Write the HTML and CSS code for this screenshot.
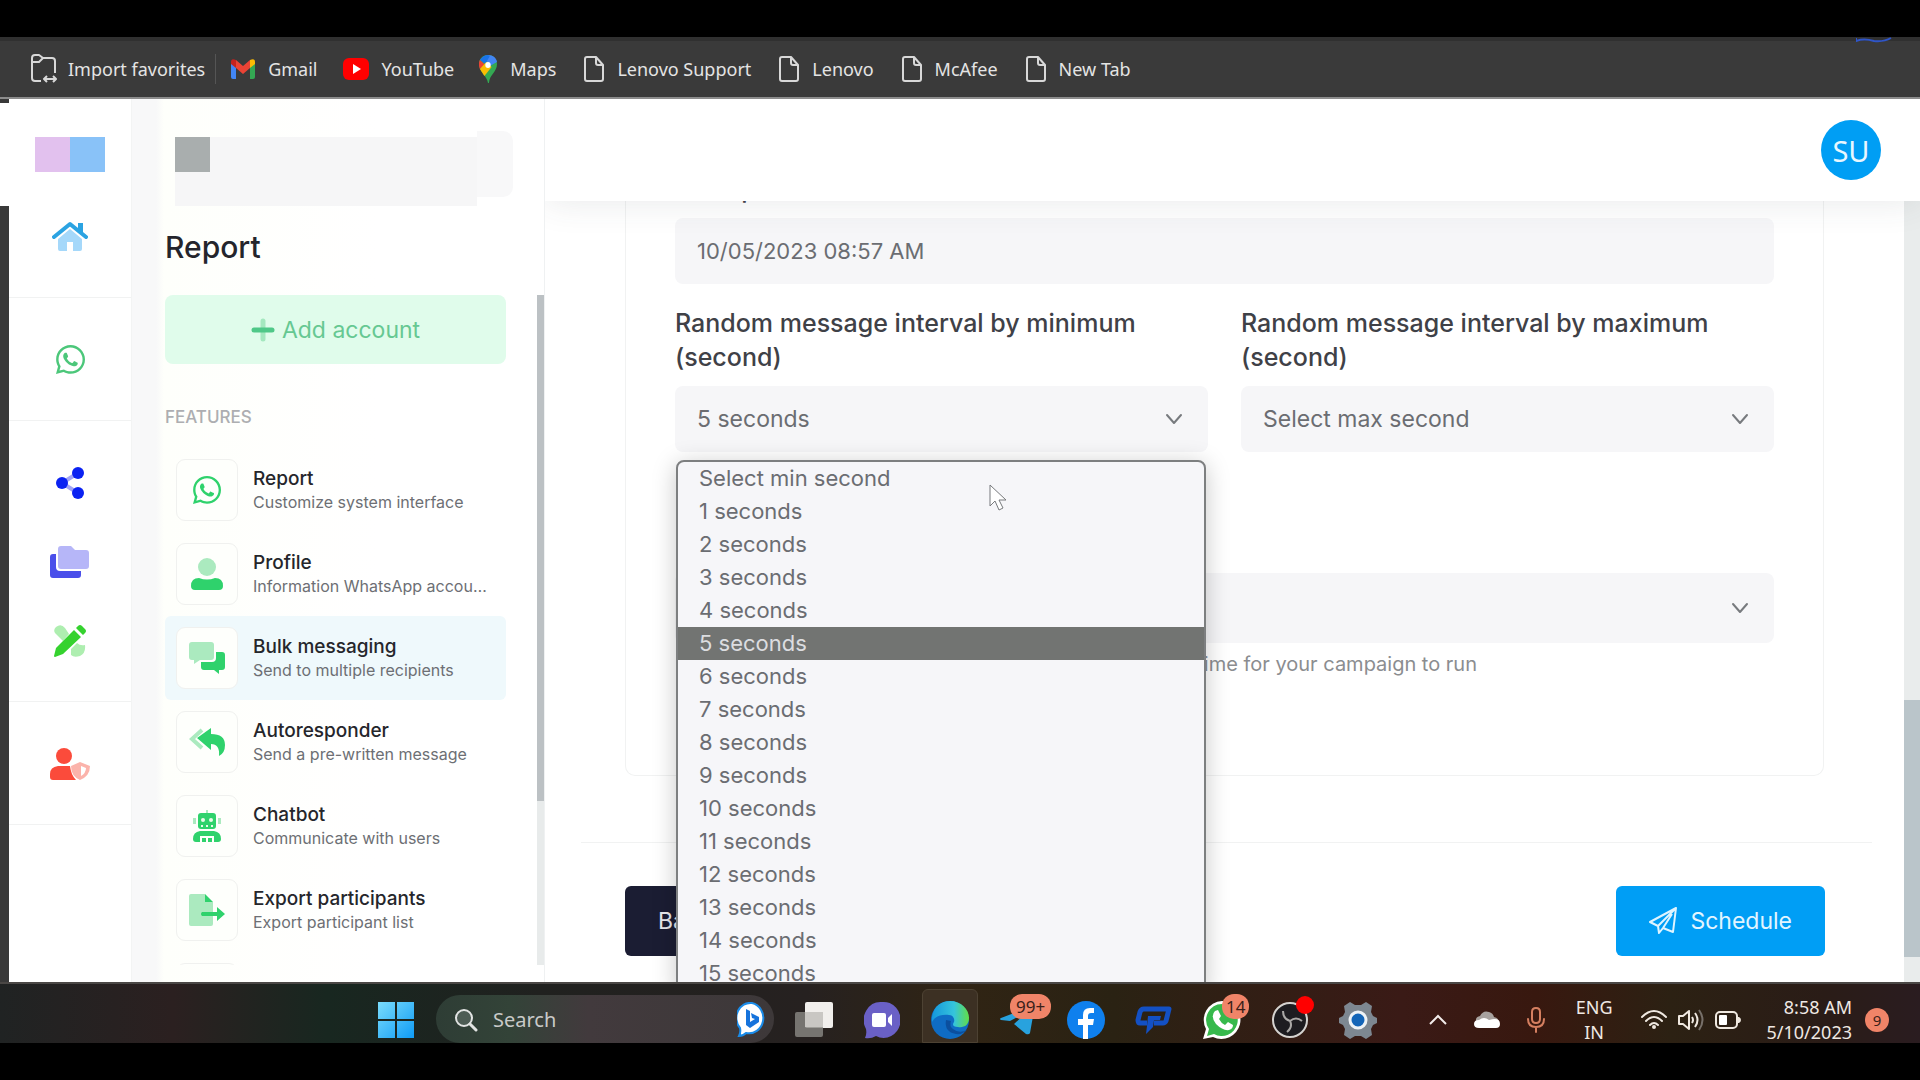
FILE: index.html
```html
<!DOCTYPE html>
<html lang="en">
<head>
  <meta charset="utf-8">
  <title>Bulk messaging</title>
  <link rel="stylesheet" href="styles.css">
</head>
<body>
  <svg class="defs" aria-hidden="true">
    <symbol id="wa" viewBox="0 32 448 448"><path fill="currentColor" d="M380.9 97.1C339 55.1 283.2 32 223.9 32c-122.4 0-222 99.6-222 222 0 39.1 10.2 77.3 29.6 111L0 480l117.7-30.9c32.4 17.7 68.9 27 106.1 27h.1c122.3 0 224.1-99.6 224.1-222 0-59.3-25.2-115-67.1-157zm-157 341.6c-33.2 0-65.7-8.9-94-25.7l-6.7-4-69.8 18.3L72 359.2l-4.4-7c-18.5-29.4-28.2-63.3-28.2-98.2 0-101.7 82.8-184.5 184.6-184.5 49.3 0 95.6 19.2 130.4 54.1 34.8 34.9 56.2 81.2 56.1 130.5 0 101.8-84.9 184.6-186.6 184.6zm101.2-138.2c-5.5-2.8-32.8-16.2-37.9-18-5.1-1.9-8.8-2.8-12.5 2.8-3.7 5.6-14.3 18-17.6 21.8-3.2 3.7-6.5 4.2-12 1.4-32.6-16.3-54-29.1-75.5-66-5.7-9.8 5.7-9.1 16.3-30.3 1.8-3.7.9-6.9-.5-9.7-1.4-2.8-12.5-30.1-17.1-41.2-4.5-10.8-9.1-9.3-12.5-9.5-3.2-.2-6.9-.2-10.6-.2-3.7 0-9.7 1.4-14.8 6.9-5.1 5.6-19.4 19-19.4 46.3 0 27.3 19.9 53.7 22.6 57.4 2.8 3.7 39.1 59.7 94.8 83.8 35.2 15.2 49 16.5 66.6 13.9 10.7-1.6 32.8-13.4 37.4-26.4 4.6-13 4.6-24.1 3.2-26.4-1.3-2.5-5-3.9-10.5-6.6z"/></symbol>
    <symbol id="page" viewBox="0 0 20 26"><path fill="none" stroke="#d8d8d8" stroke-width="2" stroke-linejoin="round" d="M3 1h9l7 8v14q0 2-2 2H3q-2 0-2-2V3q0-2 2-2zM12 1v6q0 2 2 2h5"/></symbol>
    <symbol id="chev" viewBox="0 0 18 12"><path fill="none" stroke="#777a7e" stroke-width="2" stroke-linecap="round" stroke-linejoin="round" d="M2 2l7 8 7-8"/></symbol>
  </svg>

  <div class="letterbox"></div>

  <nav class="favbar">
    <a class="fav import" href="#"><svg width="26" height="30" viewBox="0 0 26 30"><path fill="none" stroke="#d8d8d8" stroke-width="2" stroke-linejoin="round" d="M10 27H4q-3 0-3-3V4q0-3 3-3h4l4 3h9q3 0 3 3v12M1 8h7l4-4M13 25h12M16 22l-3 3 3 3M22 22l3 3-3 3"/></svg>Import favorites</a>
    <a class="fav" href="#"><svg width="24" height="20" viewBox="0 0 24 20"><path fill="#4285f4" d="M0 3v15q0 2 2 2h3V8z"/><path fill="#34a853" d="M19 8v12h3q2 0 2-2V3z"/><path fill="#ea4335" d="M5 1l7 6 7-6v8l-7 6-7-6z"/><path fill="#c5221f" d="M0 3q0-4 5-2v8L0 5z"/><path fill="#fbbc04" d="M24 3q0-4-5-2v8l5-4z"/></svg>Gmail</a>
    <a class="fav" href="#"><svg width="26" height="22" viewBox="0 0 26 22"><rect width="26" height="22" rx="6" fill="#f00"/><path fill="#fff" d="M10 6v10l8-5z"/></svg>YouTube</a>
    <a class="fav" href="#"><svg width="18" height="28" viewBox="0 0 20 28" preserveAspectRatio="none"><path fill="#34a853" d="M0 9C0 4 4 0 10 0s10 4 10 9c0 8-8 10-9 19h-1C9 21 0 17 0 9z"/><path fill="#4285f4" d="M10 0c6 0 9 3 10 7l-8 4-6-9z"/><path fill="#1a73e8" d="M10 0C6 0 3 2 1 5l6 4 5-8z"/><path fill="#ea4335" d="M1 5l6 5-6 4C-1 9 0 7 1 5z"/><path fill="#fbbc04" d="M1 14l7-7 6 5-8 9z"/><circle cx="10" cy="10" r="3" fill="#fff"/></svg>Maps</a>
    <a class="fav doc" href="#"><svg width="20" height="26"><use href="#page"/></svg>Lenovo Support</a>
    <a class="fav doc" href="#"><svg width="20" height="26"><use href="#page"/></svg>Lenovo</a>
    <a class="fav doc" href="#"><svg width="20" height="26"><use href="#page"/></svg>McAfee</a>
    <a class="fav doc" href="#"><svg width="20" height="26"><use href="#page"/></svg>New Tab</a>
    <svg class="bingtip" width="36" height="6" viewBox="0 0 36 6"><path fill="none" stroke="#2f55c8" stroke-width="2" d="M0 1v3q8-3 18 0 10 1 17-3"/></svg>
  </nav>

  <div class="view">
    <div class="edge"></div>

    <nav class="rail">
      <div class="brand"><span class="px pink"></span><span class="px blue"></span></div>
      <div class="group">
        <a href="#" aria-label="Home"><svg width="36" height="30" viewBox="0 0 36 30"><path fill="#a5d8fa" d="M18 8L6 18v10q0 2 2 2h7v-9h6v9h7q2 0 2-2V18z"/><path fill="none" stroke="#2ba3e2" stroke-width="4" stroke-linecap="round" stroke-linejoin="round" d="M2 16L18 3l16 13"/><path fill="#2ba3e2" d="M26 2h5v11l-5-4z"/></svg></a>
      </div>
      <div class="group tall">
        <a href="#" aria-label="WhatsApp" class="green"><svg width="29" height="29"><use href="#wa"/></svg></a>
      </div>
      <div class="group tall">
        <a href="#" aria-label="Share"><svg width="28" height="32" viewBox="0 0 28 32"><path stroke="#a3a5f5" stroke-width="4" fill="none" d="M22 6L6 16l16 10"/><g fill="#0b22f2"><circle cx="22" cy="6" r="6"/><circle cx="6" cy="16" r="6"/><circle cx="22" cy="26" r="6"/></g></svg></a>
        <a href="#" aria-label="Files"><svg width="40" height="32" viewBox="0 0 40 32"><path fill="#4a4fea" d="M3 8h3v13q0 4 4 4h21v4q0 3-3 3H3q-3 0-3-3V11q0-3 3-3z"/><path fill="#b6b6f8" d="M11 0h10l4 4h11q3 0 3 3v13q0 3-3 3H11q-3 0-3-3V3q0-3 3-3z"/></svg></a>
        <a href="#" aria-label="Tools"><svg width="32" height="32" viewBox="0 0 32 32"><path fill="#aeeeb0" d="M2 2q5-4 9 1l4 6-6 7-8-8q-2-3 1-6zM17 24l6-6q3 3 8 2 1 8-5 11-6 2-9-1z"/><path fill="#35d22e" d="M20 5l7 7L9 29l-8 3q-1 0-1-1l2-8zM22 3l2-2q2-2 4 0l3 3q2 2 0 4l-2 2z"/></svg></a>
      </div>
      <div class="group tall">
        <a href="#" aria-label="Users"><svg width="40" height="32" viewBox="0 0 40 32"><g fill="#fb4b3b"><circle cx="14" cy="8" r="8"/><path d="M8 18h12q1 9 6 14H3q-3 0-3-3v-3q0-7 8-8z"/></g><path fill="#fbb3ab" d="M30 14l10 4q0 10-10 14-9-4-9-14zM31 18v10q5-3 5-8z" fill-rule="evenodd"/></svg></a>
      </div>
    </nav>

    <aside class="side">
      <div class="side-head"><span class="blur"><span class="px grey"></span></span><span class="pill"></span></div>
      <h2>Report</h2>
      <div class="side-body">
        <div class="list">
          <button class="add"><svg width="24" height="24" viewBox="0 0 24 24"><path stroke="#a4e8bf" stroke-width="5" stroke-linecap="round" d="M12 3v18"/><path stroke="#4fc888" stroke-width="5" stroke-linecap="round" d="M3 12h18"/></svg>Add account</button>
          <h3>FEATURES</h3>
          <a class="item" href="#"><span class="ico"><svg width="28" height="28"><use href="#wa"/></svg></span><span class="txt"><b>Report</b><small>Customize system interface</small></span></a>
          <a class="item" href="#"><span class="ico"><svg width="32" height="32" viewBox="0 0 32 32"><circle cx="16" cy="9" r="9" fill="#abeabf"/><path fill="currentColor" d="M8 20q8 3 16 0 8 0 8 8 0 4-4 4H4q-4 0-4-4 0-8 8-8z"/></svg></span><span class="txt"><b>Profile</b><small>Information WhatsApp account and more</small></span></a>
          <a class="item active" href="#"><span class="ico"><svg width="36" height="32" viewBox="0 0 36 32"><path fill="currentColor" d="M27 10h6q3 0 3 3v12q0 3-3 3h-3v4l-5-4H15q-3 0-3-3v-5h11q4 0 4-4z"/><path fill="#abeabf" d="M3 0h19q3 0 3 3v12q0 3-3 3H11l-6 4v-4H3q-3 0-3-3V3q0-3 3-3z"/></svg></span><span class="txt"><b>Bulk messaging</b><small>Send to multiple recipients</small></span></a>
          <a class="item" href="#"><span class="ico"><svg width="36" height="28" viewBox="0 0 36 28"><path fill="none" stroke="#abeabf" stroke-width="4" d="M13 2L3 11l10 9"/><path fill="currentColor" d="M8 10L22 0v6q14 0 14 11 0 8-6 11 1-12-8-12v6z"/></svg></span><span class="txt"><b>Autoresponder</b><small>Send a pre-written message</small></span></a>
          <a class="item" href="#"><span class="ico"><svg width="28" height="32" viewBox="0 0 28 32"><path fill="#abeabf" d="M0 8h3v6H0zM25 8h3v6h-3zM13 0h2v4h-2z"/><path fill="currentColor" d="M8 3h12q3 0 3 3v10q0 3-3 3H8q-3 0-3-3V6q0-3 3-3zM7 21h14q7 1 7 8 0 3-3 3h-4v-6H7v6H3q-3 0-3-3 0-7 7-8zM9 28h4v4H9zM15 28h4v4h-4z"/><g fill="#e9fbe9"><circle cx="10" cy="10" r="2"/><circle cx="18" cy="10" r="2"/><path d="M8 15h2v2H8zM13 15h2v2h-2zM18 15h2v2h-2z"/></g></svg></span><span class="txt"><b>Chatbot</b><small>Communicate with users</small></span></a>
          <a class="item" href="#"><span class="ico"><svg width="36" height="32" viewBox="0 0 36 32"><path fill="#abeabf" d="M2 0h14v8h8v22q0 2-2 2H2q-2 0-2-2V2q0-2 2-2z"/><path fill="currentColor" d="M16 0l8 8h-8zM13 18h15v-5l8 7-8 7v-5H13q-2-2 0-4z"/></svg></span><span class="txt"><b>Export participants</b><small>Export participant list</small></span></a>
          <a class="item" href="#" aria-label="More"><span class="ico"></span></a>
        </div>
        <div class="side-track"><div class="side-thumb"></div></div>
      </div>
    </aside>

    <main class="main">
      <header class="topbar"><button class="avatar">SU</button></header>
      <div class="main-body">
        <form class="sheet" onsubmit="return false">
          <div class="card">
            <label class="cut" for="post">Time post</label>
            <input class="field" id="post" type="text" value="10/05/2023 08:57 AM">
            <div class="cols">
              <div class="col">
                <label for="min">Random message interval by minimum (second)</label>
                <div class="pick">
                  <select class="field" id="min"><option>5 seconds</option></select>
                  <svg width="18" height="12"><use href="#chev"/></svg>
                </div>
                <ul class="menu" role="listbox" aria-label="Minimum seconds">
                  <li role="option">Select min second</li>
                  <li role="option">1 seconds</li>
                  <li role="option">2 seconds</li>
                  <li role="option">3 seconds</li>
                  <li role="option">4 seconds</li>
                  <li role="option" class="on" aria-selected="true">5 seconds</li>
                  <li role="option">6 seconds</li>
                  <li role="option">7 seconds</li>
                  <li role="option">8 seconds</li>
                  <li role="option">9 seconds</li>
                  <li role="option">10 seconds</li>
                  <li role="option">11 seconds</li>
                  <li role="option">12 seconds</li>
                  <li role="option">13 seconds</li>
                  <li role="option">14 seconds</li>
                  <li role="option">15 seconds</li>
                </ul>
              </div>
              <div class="col">
                <label for="max">Random message interval by maximum (second)</label>
                <div class="pick">
                  <select class="field" id="max"><option>Select max second</option></select>
                  <svg width="18" height="12"><use href="#chev"/></svg>
                </div>
              </div>
            </div>
            <div class="pick run">
              <select class="field" aria-label="Campaign time"><option></option></select>
              <svg width="18" height="12"><use href="#chev"/></svg>
            </div>
            <p class="help">time for your campaign to run</p>
          </div>
          <footer class="actions">
            <button class="btn dark">Back</button>
            <button class="btn primary"><svg width="28" height="28" viewBox="0 0 28 28"><path fill="none" stroke="#dff4ff" stroke-width="2" stroke-linejoin="round" d="M27 1L1 15l8 4 1 7 4-5 10 4zM27 1L9 19M23 7l-9 14"/></svg>Schedule</button>
          </footer>
        </form>
        <div class="track"><div class="thumb"></div></div>
      </div>
    </main>

    <svg class="cursor" width="18" height="28" viewBox="0 0 18 28"><path fill="#fff" stroke="#77797c" d="M1 1v21l5-5 4 9 4-2-4-8h7z"/></svg>
  </div>

  <div class="taskbar">
    <button class="app" aria-label="Start"><svg width="36" height="36" viewBox="0 0 36 36"><defs><linearGradient id="win" x1="0" y1="0" x2="1" y2="1"><stop offset="0" stop-color="#7adcfb"/><stop offset="1" stop-color="#0f9bf5"/></linearGradient></defs><path fill="url(#win)" d="M0 0h17v17H0zM19 0h17v17H19zM0 19h17v17H0zM19 19h17v17H19z"/></svg></button>
    <label class="search">
      <svg width="24" height="24" viewBox="0 0 24 24"><circle cx="10" cy="10" r="8" fill="#4d5c54" stroke="#e2e4e3" stroke-width="2"/><path stroke="#e2e4e3" stroke-width="3" stroke-linecap="round" d="M16 16l6 6"/></svg>
      <input type="text" placeholder="Search" aria-label="Search">
      <svg width="30" height="36" viewBox="0 0 30 36"><path fill="#fff" stroke="#1a8be8" stroke-width="2" d="M15 1a14 15 0 1 1-6 30q-3 3-7 3 2-4 1-8A14 15 0 0 1 15 1z"/><path fill="#1673dc" d="M9 7l4 2v11l5-3-3-1-1-5 8 4v5l-9 6-4-3z"/></svg>
    </label>
    <button class="app" aria-label="Task view"><svg width="38" height="36" viewBox="0 0 38 36"><rect x="10" width="28" height="26" rx="2" fill="#f1efec"/><rect y="10" width="28" height="25" rx="2" fill="#8b8985" opacity=".8"/><path fill="#c9c7c3" d="M10 10h18v15H10z"/></svg></button>
    <button class="app" aria-label="Chat"><svg width="36" height="38" viewBox="0 0 36 38"><path fill="#6a60c6" d="M18 1a17 18 0 1 1-6 34q-5 3-11 2 2-4 1-9A17 18 0 0 1 18 1z"/><rect x="8" y="12" width="14" height="14" rx="2" fill="#fff"/><path fill="#fff" d="M24 17l4-4v12l-4-4z"/></svg></button>
    <button class="app open" aria-label="Edge"><svg width="38" height="40" viewBox="0 0 38 40"><defs><linearGradient id="eg"><stop offset="0" stop-color="#1597dc"/><stop offset=".6" stop-color="#35c4dc"/><stop offset="1" stop-color="#62de45"/></linearGradient></defs><circle cx="19" cy="20" r="19" fill="#0f6cc4"/><path fill="url(#eg)" d="M1 17C3 6 10 1 19 1c11 0 19 8 19 17 0 7-5 10-11 9-5 0-6-2-4-5 1-3-1-7-5-7-7-1-14 1-17 7z"/><path fill="#0b4f9e" d="M15 20q-2 12 10 14 6 1 11-4-8 4-14-1-4-3-2-8z"/></svg></button>
    <button class="app" aria-label="Telegram"><svg width="38" height="30" viewBox="0 0 38 30"><path fill="#28a2de" d="M2 13L36 0l-5 28q-1 2-4 1L15 19 28 7 11 16l-9-1q-2-1 0-2z"/></svg><span class="badge">99+</span></button>
    <button class="app" aria-label="Facebook"><svg width="38" height="38" viewBox="0 0 38 38"><circle cx="19" cy="19" r="19" fill="#0f80ee"/><path fill="#fff" d="M16 38V24h-5v-6h5v-4q0-7 7-7h4v5h-3q-3 0-3 3v3h6l-1 6h-5v14z"/></svg></button>
    <button class="app" aria-label="Recorder"><svg width="38" height="28" viewBox="0 0 38 28"><path fill="none" stroke="#1350c4" stroke-width="5" stroke-linejoin="round" d="M12 17H5q-2 0-2-3l2-8q1-3 4-3h25l-3 12q-1 2-3 2h-9"/><path fill="#1350c4" d="M13 10h13l-1 4h-6l-1 7-7 7 1-8z"/></svg></button>
    <button class="app" aria-label="WhatsApp"><svg width="38" height="38" viewBox="0 0 38 38"><path fill="#fff" d="M19 0a19 19 0 1 1-9 36L0 38l3-10A19 19 0 0 1 19 0z"/><path fill="#37b94c" d="M19 3a16 16 0 1 1-8 30l-7 2 2-7A16 16 0 0 1 19 3z"/><path fill="#fff" d="M12 10l3-1 3 6-2 3q2 4 6 6l3-3 5 3q0 4-4 5-6 1-13-6-6-8-1-13z"/></svg><span class="badge round">14</span></button>
    <button class="app" aria-label="OBS"><svg width="36" height="36" viewBox="0 0 36 36"><circle cx="18" cy="18" r="17" fill="#1d1c20" stroke="#d5d3d0" stroke-width="2"/><path fill="none" stroke="#aaa8a6" stroke-width="2" d="M18 19q-7-2-7-10M18 19q6-5 12 0M18 19q3 6-3 11"/></svg><span class="dot"></span></button>
    <button class="app" aria-label="Settings"><svg width="38" height="38" viewBox="0 0 38 38"><path fill="#7d8791" d="M11 1l5 3h6l5-3 6 4-1 6 2 4 4 2v5l-4 2-2 4 1 6-6 4-5-3h-6l-5 3-6-4 1-6-2-4-4-2v-5l4-2 2-4-1-6z"/><circle cx="19" cy="19" r="8" fill="#1465b8" stroke="#eef2f6" stroke-width="3"/></svg></button>

    <div class="tray">
      <button class="t1" aria-label="Hidden icons"><svg width="18" height="12" viewBox="0 0 18 12"><path fill="none" stroke="#f3ecea" stroke-width="2" d="M1 10l8-8 8 8"/></svg></button>
      <button class="t2" aria-label="OneDrive"><svg width="26" height="18" viewBox="0 0 26 18"><path fill="#a8a29f" d="M2 11Q1 6 6 5q3-6 9-4 4 1 5 5 5 1 5 6H2z"/><path fill="#fff" d="M5 17q-5 0-5-4t5-4q5-4 10 0 11-3 11 4 0 4-4 4z"/></svg></button>
      <button class="t3" aria-label="Microphone"><svg width="18" height="26" viewBox="0 0 18 26"><path fill="none" stroke="#d57f60" stroke-width="2" stroke-linecap="round" d="M9 1q4 0 4 4v7q0 4-4 4t-4-4V5q0-4 4-4zM1 12q0 8 8 8t8-8M9 20v5"/></svg></button>
      <button class="lang">ENG<br>IN</button>
      <button class="t4" aria-label="Network"><svg width="26" height="20" viewBox="0 0 26 20"><g fill="none" stroke="#efe8e0" stroke-width="2" stroke-linecap="round"><path d="M1 7q12-12 24 0M5 11q8-8 16 0M9 15q4-4 8 0"/></g><circle cx="13" cy="17" r="2" fill="#efe8e0"/></svg></button>
      <button class="t5" aria-label="Volume"><svg width="26" height="22" viewBox="0 0 26 22"><path fill="none" stroke="#efe8e0" stroke-width="2" stroke-linejoin="round" d="M1 7h4l6-5v18l-6-5H1zM14 8q2 3 0 6M17 4q5 7 0 14"/><path fill="none" stroke="#77706a" stroke-width="2" d="M21 1q7 10 0 20"/></svg></button>
      <button class="t6" aria-label="Battery"><svg width="26" height="18" viewBox="0 0 26 18"><rect x="1" y="1" width="21" height="16" rx="4" fill="none" stroke="#efe8e0" stroke-width="2"/><rect x="4" y="4" width="8" height="10" rx="1" fill="#fff"/><path fill="#efe8e0" d="M23 6h1q2 1 2 3t-2 3h-1z"/></svg></button>
      <button class="clock">8:58 AM<br>5/10/2023</button>
      <button class="bell">9</button>
    </div>
  </div>

  <div class="letterbox"></div>
</body>
</html>
```
FILE: styles.css
```css
* {
  box-sizing: border-box;
}
body {
  margin: 0;
  height: 100vh;
  display: flex;
  flex-direction: column;
  overflow: hidden;
  background: #000;
  color: #3f4147;
  font-family: Inter, sans-serif;
}
a {
  color: inherit;
  text-decoration: none;
}
button {
  border: 0;
  padding: 0;
  background: none;
  font: inherit;
  color: inherit;
}
svg {
  display: block;
  flex: none;
}
.defs {
  position: absolute;
  width: 0;
  height: 0;
}
.letterbox {
  flex: none;
  height: 37px;
  background: #000;
}

/* favourites */
.favbar {
  flex: none;
  height: 62px;
  display: flex;
  align-items: center;
  gap: 25px;
  padding-left: 31px;
  background: #3a3a3a;
  border-top: 4px solid #303030;
  border-bottom: 2px solid #8c8c8c;
  font-family: "Noto Sans", sans-serif;
  font-size: 18px;
  color: #e4e4e4;
  position: relative;
}
.fav {
  display: flex;
  align-items: center;
  gap: 13px;
}
.doc {
  margin-left: 3px;
}
.import {
  gap: 11px;
  border-right: 1px solid #555;
  padding-right: 10px;
  margin-right: -10px;
}
.bingtip {
  position: absolute;
  right: 28px;
  top: -4px;
}

/* page */
.view {
  flex: 1;
  min-height: 0;
  display: flex;
  background: #fff;
  position: relative;
}
.edge {
  flex: none;
  width: 9px;
  background: linear-gradient(#393939 4px, #fff 4px, #fff 107px, #393939 107px);
}
.px {
  display: block;
  width: 35px;
  height: 35px;
}
.pink { background: #e2c1ee; }
.blue { background: #89c2f8; }
.grey { background: #a9aeae; }

.rail {
  flex: none;
  width: 123px;
  border-right: 1px solid #f3f4f4;
}
.brand {
  height: 97px;
  padding: 38px 0 0 26px;
  display: flex;
}
.group {
  border-bottom: 1px solid #f1f2f2;
  padding-bottom: 22px;
}
.group.tall {
  padding: 22px 0 21px;
}
.group a {
  height: 79px;
  display: flex;
  align-items: center;
  justify-content: center;
}
.green {
  color: #4cc77a;
}

.side {
  flex: none;
  width: 413px;
  padding-bottom: 17px;
  display: flex;
  flex-direction: column;
  border-right: 1px solid #eff1f2;
  background: linear-gradient(90deg, #f8f8f9 24px, #fefffb 32px, #fff 60%);
}
.side-head {
  flex: none;
  height: 107px;
  padding-left: 43px;
  display: flex;
}
.blur {
  width: 302px;
  height: 69px;
  margin-top: 38px;
  background: #f6f6f7;
}
.pill {
  width: 36px;
  height: 66px;
  margin-top: 32px;
  border-radius: 0 10px 10px 0;
  background: #f8f8f9;
}
.side h2 {
  flex: none;
  margin: 0;
  height: 89px;
  padding-left: 33px;
  line-height: 83px;
  font-size: 30px;
  font-weight: 500;
  color: #24252c;
}
.side-body {
  flex: 1;
  min-height: 0;
  display: flex;
  justify-content: space-between;
}
.list {
  width: 341px;
  margin-left: 33px;
  overflow: hidden;
}
.add {
  width: 100%;
  height: 69px;
  border-radius: 8px;
  background: #e0fceb;
  color: #66c892;
  font-size: 23px;
  display: flex;
  align-items: center;
  justify-content: center;
  gap: 7px;
}
.side h3 {
  margin: 0;
  height: 84px;
  line-height: 106px;
  font-size: 17px;
  font-weight: 500;
  color: #adaeb1;
}
.item {
  height: 84px;
  padding: 0 11px;
  display: flex;
  align-items: center;
  gap: 15px;
}
.item.active {
  background: #eff9fc;
  border-radius: 6px;
}
.ico {
  flex: none;
  width: 62px;
  height: 62px;
  border: 1px solid #f0f1ef;
  border-radius: 9px;
  background: #fefffc;
  color: #2fd26c;
  display: flex;
  align-items: center;
  justify-content: center;
}
.txt {
  min-width: 0;
  display: flex;
  flex-direction: column;
}
.txt b {
  font-size: 19px;
  line-height: 24px;
  font-weight: 500;
  color: #25262b;
}
.txt small {
  font-size: 16px;
  line-height: 22px;
  color: #6d6f74;
  white-space: nowrap;
  overflow: hidden;
  text-overflow: ellipsis;
}
.side-track {
  width: 7px;
  background: #e8ebeb;
}
.side-thumb {
  height: 506px;
  background: #bcc1c4;
}

.main {
  flex: 1;
  min-width: 0;
  display: flex;
  flex-direction: column;
  overflow: hidden;
}
.topbar {
  flex: none;
  height: 102px;
  padding-right: 39px;
  display: flex;
  align-items: center;
  justify-content: flex-end;
  background: #fff;
  box-shadow: 0 0 36px rgba(60, 65, 75, .12);
  position: relative;
  z-index: 1;
}
.avatar {
  width: 60px;
  height: 60px;
  border-radius: 50%;
  background: #009ef4;
  color: #e8f7ff;
  font-family: "Noto Sans", sans-serif;
  font-size: 29px;
}
.main-body {
  flex: 1;
  min-height: 0;
  display: flex;
}
.sheet {
  flex: 1;
  min-width: 0;
  overflow: hidden;
  padding: 0 32px 0 36px;
}
.card {
  margin: 0 48px 0 44px;
  padding: 0 49px 90px;
  border: 1px solid #f1f2f2;
  border-top: 0;
  border-radius: 0 0 10px 10px;
}
label {
  display: block;
  font-size: 25px;
  line-height: 34px;
  font-weight: 500;
}
.cut {
  margin-top: -29px;
  margin-bottom: 12px;
}
.field {
  display: block;
  width: 100%;
  height: 66px;
  padding: 0 22px;
  border: 0;
  border-radius: 8px;
  background: #f6f6f8;
  appearance: none;
  font: inherit;
  font-size: 22px;
  font-weight: 400;
  color: #6b6d72;
}
select.field {
  font-size: 23px;
}
.cols {
  display: grid;
  grid-template-columns: 1fr 1fr;
  gap: 33px;
  padding-top: 22px;
}
.col {
  position: relative;
}
.pick {
  display: grid;
  align-items: center;
}
.pick > * {
  grid-area: 1 / 1;
}
.pick svg {
  justify-self: end;
  margin-right: 25px;
  pointer-events: none;
}
.col .pick {
  margin-top: 12px;
}
.run {
  margin-top: 121px;
}
.run .field {
  height: 70px;
}
.help {
  margin: 4px 0;
  width: 802px;
  text-align: right;
  font-size: 20px;
  line-height: 34px;
  color: #8b8d90;
}
.menu {
  position: absolute;
  left: 1px;
  right: 2px;
  top: 154px;
  margin: 0;
  padding: 0;
  list-style: none;
  border: 2px solid #7d7f80;
  border-radius: 8px 8px 0 0;
  background: #f6f6f9;
  box-shadow: 0 4px 24px rgba(0, 0, 0, .22);
  font-size: 22px;
  line-height: 33px;
  color: #6b6d72;
}
.menu li {
  padding-left: 21px;
}
.menu .on {
  background: #727472;
  color: #dcdde0;
}
.actions {
  margin-top: 66px;
  padding: 43px 47px 0 44px;
  border-top: 1px solid #f1f2f2;
  display: flex;
  justify-content: space-between;
}
.btn {
  height: 70px;
  padding: 0 33px;
  border-radius: 6px;
  font-size: 23px;
  display: flex;
  align-items: center;
  gap: 13px;
}
.dark {
  background: #1b1d33;
  color: #e9e9ee;
}
.primary {
  background: #009ef5;
  color: #e2f5ff;
}
.track {
  flex: none;
  width: 16px;
  background: #e9ecec;
  padding-top: 499px;
}
.thumb {
  height: 257px;
  background: #bac5ca;
}
.cursor {
  position: absolute;
  left: 989px;
  top: 385px;
}

/* taskbar */
.taskbar {
  flex: none;
  height: 61px;
  padding-left: 362px;
  padding-right: 31px;
  display: flex;
  align-items: flex-end;
  overflow: hidden;
  border-top: 2px solid #4a4745;
  background: linear-gradient(90deg, #202323 0, #2b2020 9%, #182720 17%, #20211f 28%, #262120 42%, #302414 50%, #2a2213 58%, #3a1a16 73%, #38180f 80%, #2c2113 87%, #2a1c17 95%, #2a1c20 100%);
  font-family: "Noto Sans", sans-serif;
  color: #efe8e3;
}
.app {
  flex: none;
  width: 68px;
  height: 46px;
  display: flex;
  align-items: center;
  justify-content: center;
  position: relative;
}
.open svg {
  position: relative;
}
.open::before {
  content: "";
  position: absolute;
  left: 6px;
  right: 6px;
  top: -8px;
  bottom: 0;
  border: 1px solid #4d4233;
  border-radius: 6px 6px 0 0;
  background: #3c3023;
}
.badge {
  position: absolute;
  left: 26px;
  top: -3px;
  padding: 0 6px;
  border-radius: 12px;
  background: #f08468;
  color: #3a1f19;
  font-size: 17px;
  line-height: 25px;
}
.badge.round {
  left: 34px;
  padding: 0 4px;
}
.dot {
  position: absolute;
  left: 40px;
  top: -1px;
  width: 18px;
  height: 18px;
  border-radius: 50%;
  background: #f00;
}
.search {
  flex: none;
  width: 338px;
  height: 48px;
  margin: 0 6px;
  padding: 2px 7px 0 18px;
  border-radius: 24px;
  background: linear-gradient(90deg, #2e3d35, #334338 22%, #423a3d 45%, #3d3839);
  display: flex;
  align-items: center;
  gap: 15px;
}
.search input {
  flex: 1;
  min-width: 0;
  border: 0;
  padding: 0;
  background: none;
  font: inherit;
  font-size: 20px;
  font-weight: 400;
}
.search input::placeholder {
  color: #c9cac8;
}
.tray {
  margin-left: auto;
  height: 59px;
  padding-top: 12px;
  display: flex;
  align-items: center;
  line-height: 25px;
  font-size: 18px;
}
.t1, .t2, .t3 { margin-right: 27px; }
.t3 { margin-right: 31px; }
.lang { margin-right: 28px; }
.t4, .t5 { margin-right: 11px; }
.t6 { margin-right: 26px; }
.clock { text-align: right; margin-right: 13px; }
.bell {
  width: 24px;
  height: 24px;
  border-radius: 50%;
  background: #f08468;
  color: #3a1f19;
  font-size: 15px;
  line-height: 24px;
}
```
